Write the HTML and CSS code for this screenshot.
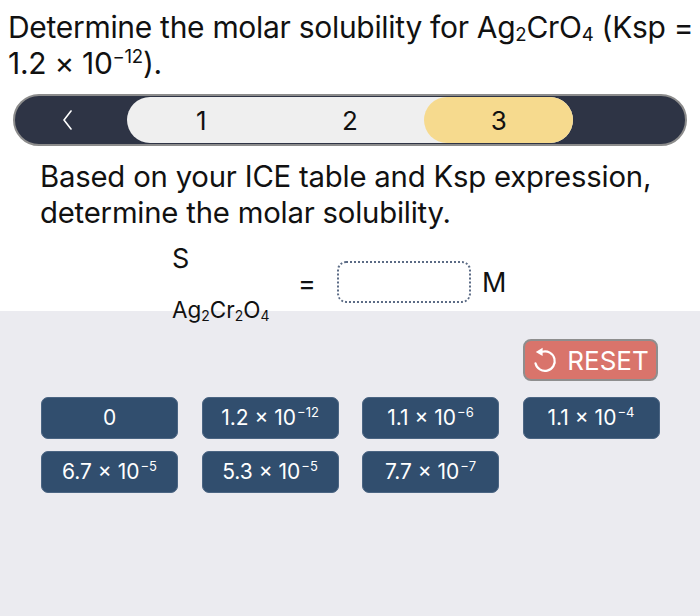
FILE: index.html
```html
<!DOCTYPE html>
<html>
<head>
<meta charset="utf-8">
<link rel="stylesheet" href="styles.css">
</head>
<body>
<p class="question">Determine the molar solubility for Ag<sub>2</sub>CrO<sub>4</sub> (Ksp =<br>1.2 × 10<sup>−12</sup>).</p>

<div class="nav">
  <div class="back">
    <svg width="14" height="20" viewBox="0 0 14 20"><polyline points="10,1 3,10 10,19" fill="none" stroke="#ffffff" stroke-width="1.6" stroke-linejoin="round" stroke-linecap="round"/></svg>
  </div>
  <div class="track">
    <div class="step">1</div>
    <div class="step">2</div>
    <div class="step active">3</div>
  </div>
</div>

<p class="prompt">Based on your ICE table and Ksp expression, determine the molar solubility.</p>

<div class="equation">
  <div class="term">
    <span class="s">S</span>
    <span class="formula">Ag<sub>2</sub>Cr<sub>2</sub>O<sub>4</sub></span>
  </div>
  <span class="eq">=</span>
  <div class="blank"></div>
  <span class="unit">M</span>
</div>

<div class="tray">
  <div class="reset-row">
    <button class="reset">
      <svg width="26" height="26" viewBox="0 0 24 24"><path d="M9.5 4.4 A9 9 0 1 1 3.2 15" fill="none" stroke="#ffffff" stroke-width="2" stroke-linecap="round"/><polygon points="3.5,4.6 9.8,0.8 9.8,8.2" fill="#ffffff"/></svg>
      <span>RESET</span>
    </button>
  </div>
  <div class="choices">
    <button class="choice"><span>0</span></button>
    <button class="choice"><span>1.2 × 10<sup>−12</sup></span></button>
    <button class="choice"><span>1.1 × 10<sup>−6</sup></span></button>
    <button class="choice"><span>1.1 × 10<sup>−4</sup></span></button>
    <button class="choice"><span>6.7 × 10<sup>−5</sup></span></button>
    <button class="choice"><span>5.3 × 10<sup>−5</sup></span></button>
    <button class="choice"><span>7.7 × 10<sup>−7</sup></span></button>
  </div>
</div>
</body>
</html>
```

FILE: styles.css
```css
html, body {
  margin: 0;
  padding: 0;
}
body {
  width: 700px;
  min-height: 616px;
  font-family: Inter, "Noto Sans", sans-serif;
  color: #111;
  background: linear-gradient(#ffffff 0, #ffffff 311px, #ebebf0 311px, #ebebf0 100%);
}
sub, sup {
  line-height: 0;
  font-size: 0.62em;
}
sub { vertical-align: -0.18em; }
sup { vertical-align: 0.6em; }

.question {
  margin: 0;
  padding: 9px 8px 0;
  font-size: 30px;
  line-height: 36px;
  letter-spacing: -0.3px;
  white-space: nowrap;
}

.nav {
  margin: 13px 13px 0;
  height: 48px;
  border: 2px solid #8c8c8c;
  border-radius: 26px;
  background: #2e3445;
  display: flex;
  align-items: center;
}
.back {
  width: 112px;
  display: flex;
  justify-content: center;
  align-items: center;
  padding-right: 6px;
  box-sizing: border-box;
}
.track {
  width: 446px;
  height: 46px;
  display: flex;
  background: #efefef;
  border-radius: 23px;
}
.step {
  flex: 1;
  display: flex;
  align-items: center;
  justify-content: center;
  font-size: 26px;
  border-radius: 23px;
}
.step.active {
  background: #f6da8e;
}

.prompt {
  margin: 13px 0 0;
  padding: 0 40px;
  font-size: 29.3px;
  line-height: 36px;
  letter-spacing: -0.2px;
}

.equation {
  margin-top: 12px;
  padding-left: 172px;
  display: flex;
  align-items: center;
  height: 80px;
}
.term {
  display: flex;
  flex-direction: column;
  width: 120px;
}
.s {
  font-size: 27px;
  line-height: 32px;
}
.formula {
  margin-top: 22px;
  font-size: 22.5px;
  line-height: 26px;
}
.eq {
  font-size: 27px;
  width: 39px;
  padding-left: 6px;
}
.blank {
  width: 130px;
  height: 38px;
  border: 2px dotted #5b6b85;
  border-radius: 9px;
  margin-top: -2px;
}
.unit {
  font-size: 27px;
  margin-left: 11px;
  margin-top: -2px;
}

.tray {
  padding: 16px 40px 0 41px;
}
.reset-row {
  display: flex;
  justify-content: flex-end;
  padding-right: 2px;
}
.reset {
  width: 135px;
  height: 42px;
  border: 2px solid #8e8e8e;
  border-radius: 8px;
  background: #d9746b;
  color: #ffffff;
  display: flex;
  align-items: center;
  justify-content: center;
  gap: 9px;
  font-family: Inter, "Noto Sans", sans-serif;
  font-size: 26px;
  padding: 0;
}
.choices {
  margin-top: 16px;
  display: grid;
  grid-template-columns: repeat(4, 137px);
  column-gap: 23.5px;
  row-gap: 12px;
}
.choice {
  height: 42px;
  border: 1px solid #4b6583;
  border-radius: 7px;
  background: #314e6e;
  color: #ffffff;
  font-family: Inter, "Noto Sans", sans-serif;
  font-size: 21px;
  padding: 0;
  display: flex;
  align-items: center;
  justify-content: center;
}
.choice span {
  line-height: 24px;
}
.choice sup {
  font-size: 13px;
  vertical-align: 8px;
  margin-left: 1px;
}
```
